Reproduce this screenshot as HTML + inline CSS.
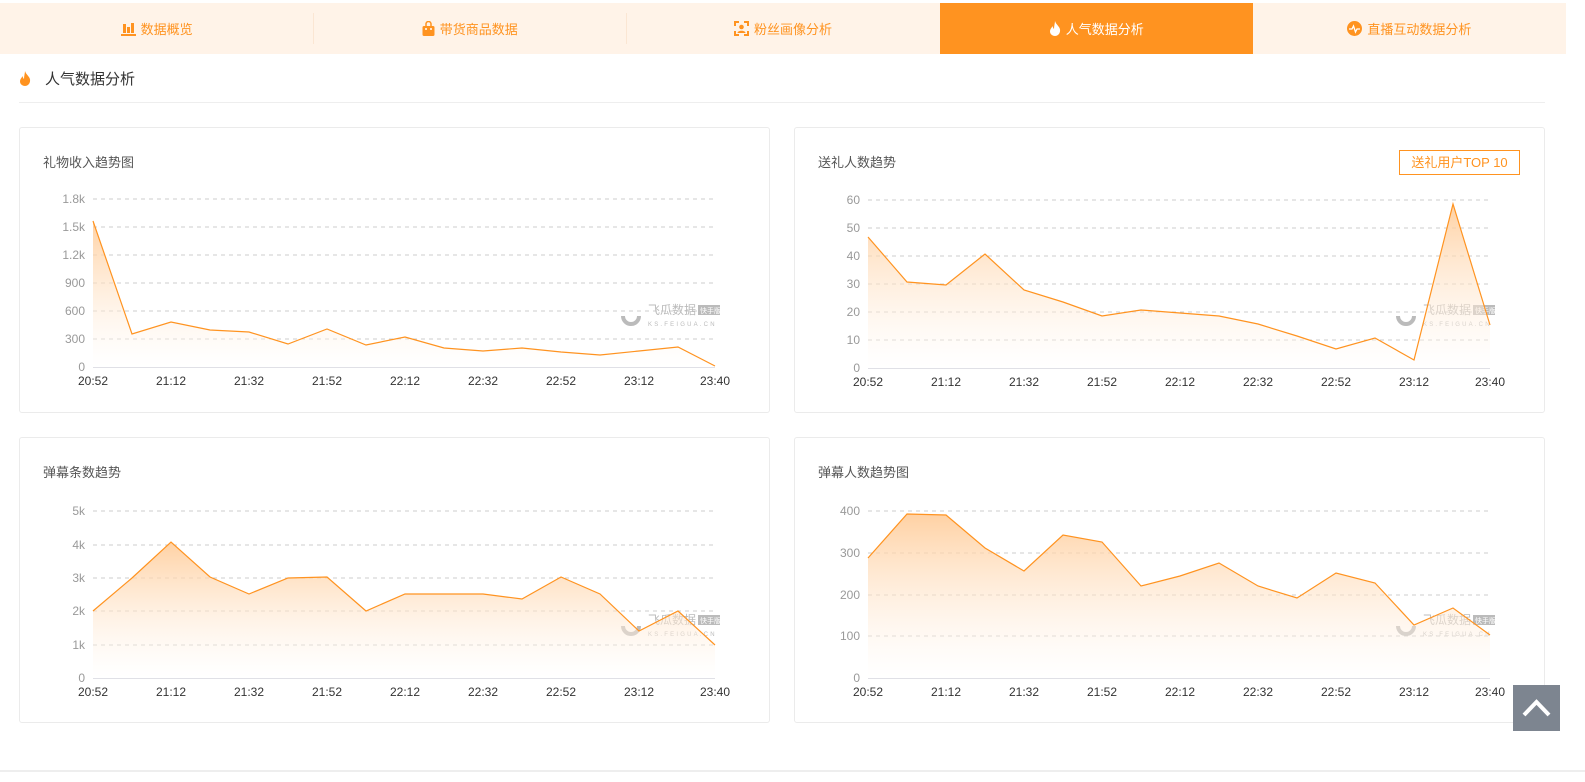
<!DOCTYPE html>
<html style="margin:0;padding:0;width:1585px;height:782px;overflow:hidden"><head><meta charset="utf-8"><style>
*{box-sizing:border-box}
body{margin:0;width:1585px;height:782px;background:#fff;font-family:"Liberation Sans","Noto Sans CJK SC",sans-serif;position:relative;overflow:hidden}
.tabs{position:absolute;left:0;top:3px;width:1566px;height:51px;background:#fff3e8;display:flex}
.tab{flex:1;display:flex;align-items:center;justify-content:center;color:#ff9320;font-size:13px;position:relative}
.tab+.tab:before{content:"";position:absolute;left:0;top:10px;bottom:10px;border-left:1px solid #fbe6d3}
.tab.act{background:#ff9320;color:#fff}
.tab.act:before,.tab.act+.tab:before{display:none}
.tab svg{margin-right:5px}
.title{position:absolute;left:19px;top:68px;font-size:15px;color:#333;display:flex;align-items:center}
.hr{position:absolute;left:19px;top:102px;width:1526px;border-top:1px solid #eee}
.card{position:absolute;border:1px solid #ebebeb;border-radius:3px;width:751px;height:286px;background:#fff}
.ct{position:absolute;left:23px;top:24px;font-size:13px;color:#555}
.btn{position:absolute;left:1399px;top:150px;width:121px;height:25px;border:1px solid #ff9320;color:#ff9320;font-size:13px;line-height:23px;text-align:center}
svg.ch{position:absolute;left:0;top:0;display:block}
.top{position:absolute;left:1513px;top:685px;width:47px;height:46px;background:#7d8590;overflow:hidden}
.top svg{display:block}
.bot{position:absolute;left:0;top:770px;width:1585px;height:2px;background:#eee}
</style></head><body>
<div class="tabs">
<div class="tab"><svg width="15" height="14"><rect x="2" y="2" width="3" height="9" fill="#ff9320"/><rect x="6" y="5" width="3" height="6" fill="#ff9320"/><rect x="10" y="1" width="3" height="10" fill="#ff9320"/><rect x="0" y="12" width="15" height="2" fill="#ff9320"/></svg>数据概览</div>
<div class="tab"><svg width="13" height="15"><path d="M4 5V3a2.5 2.5 0 0 1 5 0v2" stroke="#ff9320" fill="none" stroke-width="1.5"/><rect x="0.5" y="5" width="12" height="10" rx="1.5" fill="#ff9320"/><circle cx="4" cy="8" r="1" fill="#fff"/><circle cx="9" cy="8" r="1" fill="#fff"/></svg>带货商品数据</div>
<div class="tab"><svg width="15" height="15"><path d="M1 5V1h4M10 1h4v4M14 10v4h-4M5 14H1v-4" stroke="#ff9320" fill="none" stroke-width="2"/><circle cx="7.5" cy="6" r="2.3" fill="#ff9320"/><path d="M3.5 12c0-3 8-3 8 0z" fill="#ff9320"/></svg>粉丝画像分析</div>
<div class="tab act"><svg width="12" height="15"><path d="M6 0C7 4 12 6 11 10.5 10.5 13.5 8 15 6 15S1 13.5 1 10.5C1 8 3 6.5 3.5 5 4 7 5 8 5 8 5 5 6 2 6 0z" fill="#fff"/></svg>人气数据分析</div>
<div class="tab"><svg width="15" height="15"><circle cx="7.5" cy="7.5" r="7.5" fill="#ff9320"/><path d="M2 8h3l1.5-3 2 6 1.5-3h3" stroke="#fff" fill="none" stroke-width="1.3"/></svg>直播互动数据分析</div>
</div>
<div class="title"><svg width="12" height="15" style="margin-right:14px"><path d="M6 0C7 4 12 6 11 10.5 10.5 13.5 8 15 6 15S1 13.5 1 10.5C1 8 3 6.5 3.5 5 4 7 5 8 5 8 5 5 6 2 6 0z" fill="#ff9320"/></svg>人气数据分析</div>
<div class="hr"></div>
<div class="card" style="left:19px;top:127px"><div class="ct">礼物收入趋势图</div></div>
<div class="card" style="left:794px;top:127px"><div class="ct">送礼人数趋势</div></div>
<div class="card" style="left:19px;top:437px"><div class="ct">弹幕条数趋势</div></div>
<div class="card" style="left:794px;top:437px"><div class="ct">弹幕人数趋势图</div></div>
<div class="btn">送礼用户TOP 10</div>
<svg class="ch" width="1580" height="760" font-family="Liberation Sans, sans-serif" font-size="12">
<defs><linearGradient id="g" x1="0" y1="0" x2="0" y2="1"><stop offset="0" stop-color="#ffc993" stop-opacity=".85"/><stop offset="1" stop-color="#fff" stop-opacity=".3"/></linearGradient>
<g id="wm"><path d="M3 8a8 8 0 1 0 16 0" stroke="#bbb" stroke-width="4" fill="none"/><text x="28" y="6" font-size="12" fill="#bbb" font-family="Noto Sans CJK SC">飞瓜数据</text><rect x="78" y="-3" width="22" height="10" fill="#bbb"/><text x="80" y="5" font-size="7" fill="#fff" font-family="Noto Sans CJK SC">快手版</text><text x="28" y="18" font-size="6" fill="#bbb" letter-spacing="2.2">KS.FEIGUA.CN</text></g></defs>
<g stroke="#ccc" stroke-dasharray="4,4">
<path d="M93 199H715M93 227H715M93 255H715M93 283H715M93 311H715M93 339H715"/>
<path d="M868 200H1490M868 228H1490M868 256H1490M868 284H1490M868 312H1490M868 340H1490"/>
<path d="M93 511H715M93 545H715M93 578H715M93 611H715M93 645H715"/>
<path d="M868 511H1490M868 553H1490M868 595H1490M868 636H1490"/>
</g>
<g stroke="#e0e0e6"><path d="M93 367.5H715M868 368.5H1490M93 678.5H715M868 678.5H1490"/></g>
<g fill="#999" text-anchor="end">
<text x="85" y="203">1.8k</text><text x="85" y="231">1.5k</text><text x="85" y="259">1.2k</text><text x="85" y="287">900</text><text x="85" y="315">600</text><text x="85" y="343">300</text><text x="85" y="371">0</text>
<text x="860" y="204">60</text><text x="860" y="232">50</text><text x="860" y="260">40</text><text x="860" y="288">30</text><text x="860" y="316">20</text><text x="860" y="344">10</text><text x="860" y="372">0</text>
<text x="85" y="515">5k</text><text x="85" y="549">4k</text><text x="85" y="582">3k</text><text x="85" y="615">2k</text><text x="85" y="649">1k</text><text x="85" y="682">0</text>
<text x="860" y="515">400</text><text x="860" y="557">300</text><text x="860" y="599">200</text><text x="860" y="640">100</text><text x="860" y="682">0</text>
</g>
<g fill="#333" text-anchor="middle">
<g id="xl"><text x="93" y="385">20:52</text><text x="171" y="385">21:12</text><text x="249" y="385">21:32</text><text x="327" y="385">21:52</text><text x="405" y="385">22:12</text><text x="483" y="385">22:32</text><text x="561" y="385">22:52</text><text x="639" y="385">23:12</text><text x="715" y="385">23:40</text></g>
<use href="#xl" x="775" y="1"/><use href="#xl" y="311"/><use href="#xl" x="775" y="311"/>
</g>
<use href="#wm" x="620" y="308"/><use href="#wm" x="1395" y="308"/><use href="#wm" x="620" y="618"/><use href="#wm" x="1395" y="618"/>
<g fill="url(#g)" stroke="none">
<path d="M93 367L93 221 132 334 171 322 210 330 249 332 288 344 327 329 366 345 405 337 444 348 483 351 522 348 561 352 600 355 639 351 678 347 715 366 715 367Z"/>
<path d="M868 368L868 237 907 282 946 285 985 254 1024 290 1063 302 1102 316 1141 310 1180 313 1219 316 1258 324 1297 336 1336 349 1375 338 1414 360 1453 204 1490 325 1490 368Z"/>
<path d="M93 678L93 611 132 578 171 542 210 577 249 594 288 578 327 577 366 611 405 594 444 594 483 594 522 599 561 577 600 594 639 631 678 611 715 645 715 678Z"/>
<path d="M868 678L868 558 907 514 946 515 985 548 1024 571 1063 535 1102 542 1141 586 1180 576 1219 563 1258 586 1297 598 1336 573 1375 583 1414 625 1453 608 1490 635 1490 678Z"/>
</g>
<g fill="none" stroke="#ff9320" stroke-width="1.2">
<path d="M93 221 132 334 171 322 210 330 249 332 288 344 327 329 366 345 405 337 444 348 483 351 522 348 561 352 600 355 639 351 678 347 715 366"/>
<path d="M868 237 907 282 946 285 985 254 1024 290 1063 302 1102 316 1141 310 1180 313 1219 316 1258 324 1297 336 1336 349 1375 338 1414 360 1453 204 1490 325"/>
<path d="M93 611 132 578 171 542 210 577 249 594 288 578 327 577 366 611 405 594 444 594 483 594 522 599 561 577 600 594 639 631 678 611 715 645"/>
<path d="M868 558 907 514 946 515 985 548 1024 571 1063 535 1102 542 1141 586 1180 576 1219 563 1258 586 1297 598 1336 573 1375 583 1414 625 1453 608 1490 635"/>
</g>
</svg>
<div class="top"><svg width="47" height="46"><path d="M11 30L23.5 17 36 30" stroke="#fff" stroke-width="4" fill="none"/></svg></div>
<div class="bot"></div>
</body></html>
